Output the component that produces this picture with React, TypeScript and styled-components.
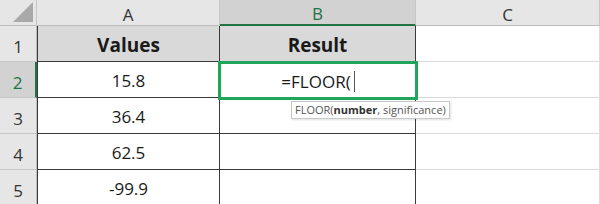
import React from 'react';
import styled, { createGlobalStyle } from 'styled-components';

const GlobalStyle = createGlobalStyle`
  html, body {
    margin: 0;
    padding: 0;
    background: #ffffff;
    overflow: hidden;
  }
  body {
    font-family: 'Open Sans', 'Noto Sans', sans-serif;
  }
`;

const GREEN = '#21a55a';

const Sheet = styled.div`
  display: grid;
  grid-template-columns: 37px 183px 196px 1fr;
  grid-template-rows: 26px 36px 36px 36px 36px 36px;
  width: 600px;
  height: 204px;
  overflow: hidden;
  position: relative;
`;

const Corner = styled.div`
  background: #e6e6e6;
  border-right: 1px solid #c6c6c6;
  border-bottom: 1px solid #bdbdbd;
  display: flex;
  align-items: flex-end;
  justify-content: flex-end;
  padding: 0 3px 3px 0;
  box-sizing: border-box;
  overflow: visible;
`;

const CornerIcon = styled.svg`
  display: block;
  flex: 0 0 20px;
  width: 20px;
  height: 20px;
`;

interface IHeadProps {
  active?: boolean;
}

const ColHead = styled.div<IHeadProps>`
  background: ${({ active }) => (active ? '#d2d2d2' : '#e6e6e6')};
  border-right: 1px solid #c6c6c6;
  border-bottom: ${({ active }) => (active ? `2px solid #217346` : '1px solid #bdbdbd')};
  color: ${({ active }) => (active ? '#217346' : '#333333')};
  font-size: 17px;
  display: flex;
  align-items: center;
  justify-content: center;
  padding-top: 3px;
  box-sizing: border-box;
`;

const RowHead = styled.div<IHeadProps>`
  background: ${({ active }) => (active ? '#d2d2d2' : '#e6e6e6')};
  border-right: ${({ active }) => (active ? `2px solid #217346` : '1px solid #bdbdbd')};
  border-bottom: 1px solid #c6c6c6;
  color: ${({ active }) => (active ? '#217346' : '#333333')};
  font-size: 17px;
  display: flex;
  align-items: flex-end;
  justify-content: center;
  padding-bottom: 3px;
  box-sizing: border-box;
`;

interface ICellProps {
  $head?: boolean;
  $boxed?: boolean;
}

const Cell = styled.div<ICellProps>`
  background: ${({ $head }) => ($head ? '#d9d9d9' : '#ffffff')};
  border-right: 1px solid ${({ $boxed }) => ($boxed ? '#3a3a3a' : '#dadada')};
  border-bottom: 1px solid ${({ $boxed }) => ($boxed ? '#3a3a3a' : '#dadada')};
  color: #1a1a1a;
  font-size: ${({ $head }) => ($head ? '19px' : '17px')};
  font-weight: ${({ $head }) => ($head ? 700 : 400)};
  display: flex;
  align-items: center;
  justify-content: center;
  box-sizing: border-box;
  padding-top: 2px;
`;

const FirstCell = styled(Cell)`
  border-left: 1px solid #3a3a3a;
`;

const Editing = styled.div`
  position: absolute;
  left: 218px;
  top: 61px;
  width: 200px;
  height: 39px;
  border: 3px solid ${GREEN};
  box-sizing: border-box;
  background: #ffffff;
  display: flex;
  align-items: center;
  justify-content: center;
  padding-top: 2px;
  font-size: 17px;
  color: #1a1a1a;
`;

const Caret = styled.span`
  display: inline-block;
  width: 1px;
  height: 21px;
  background: #555555;
  margin-left: 3px;
`;

const Tip = styled.div`
  position: absolute;
  left: 291px;
  top: 101px;
  height: 18px;
  padding: 0 3px;
  border: 1px solid #c8c8c8;
  background: #ffffff;
  box-shadow: 1px 1px 2px rgba(0, 0, 0, 0.12);
  font-size: 11px;
  line-height: 16px;
  color: #555555;
  white-space: nowrap;
  box-sizing: border-box;
  b {
    color: #333333;
    font-weight: 700;
  }
`;

const values = ['15.8', '36.4', '62.5', '-99.9'];

export default function App() {
  return (
    <>
      <GlobalStyle />
      <Sheet>
        <Corner>
          <CornerIcon viewBox="0 0 20 20">
            <path d="M20 0 L20 20 L0 20 Z" fill="#a9a9a9" />
          </CornerIcon>
        </Corner>
        <ColHead>A</ColHead>
        <ColHead active>B</ColHead>
        <ColHead>C</ColHead>

        <RowHead>1</RowHead>
        <FirstCell $head $boxed>Values</FirstCell>
        <Cell $head $boxed>Result</Cell>
        <Cell />

        {values.map((v, i) => (
          <React.Fragment key={v}>
            <RowHead active={i === 0}>{i + 2}</RowHead>
            <FirstCell $boxed>{v}</FirstCell>
            <Cell $boxed />
            <Cell />
          </React.Fragment>
        ))}

        <Editing>
          =FLOOR(<Caret />
        </Editing>
        <Tip>
          FLOOR(<b>number</b>, significance)
        </Tip>
      </Sheet>
    </>
  );
}
